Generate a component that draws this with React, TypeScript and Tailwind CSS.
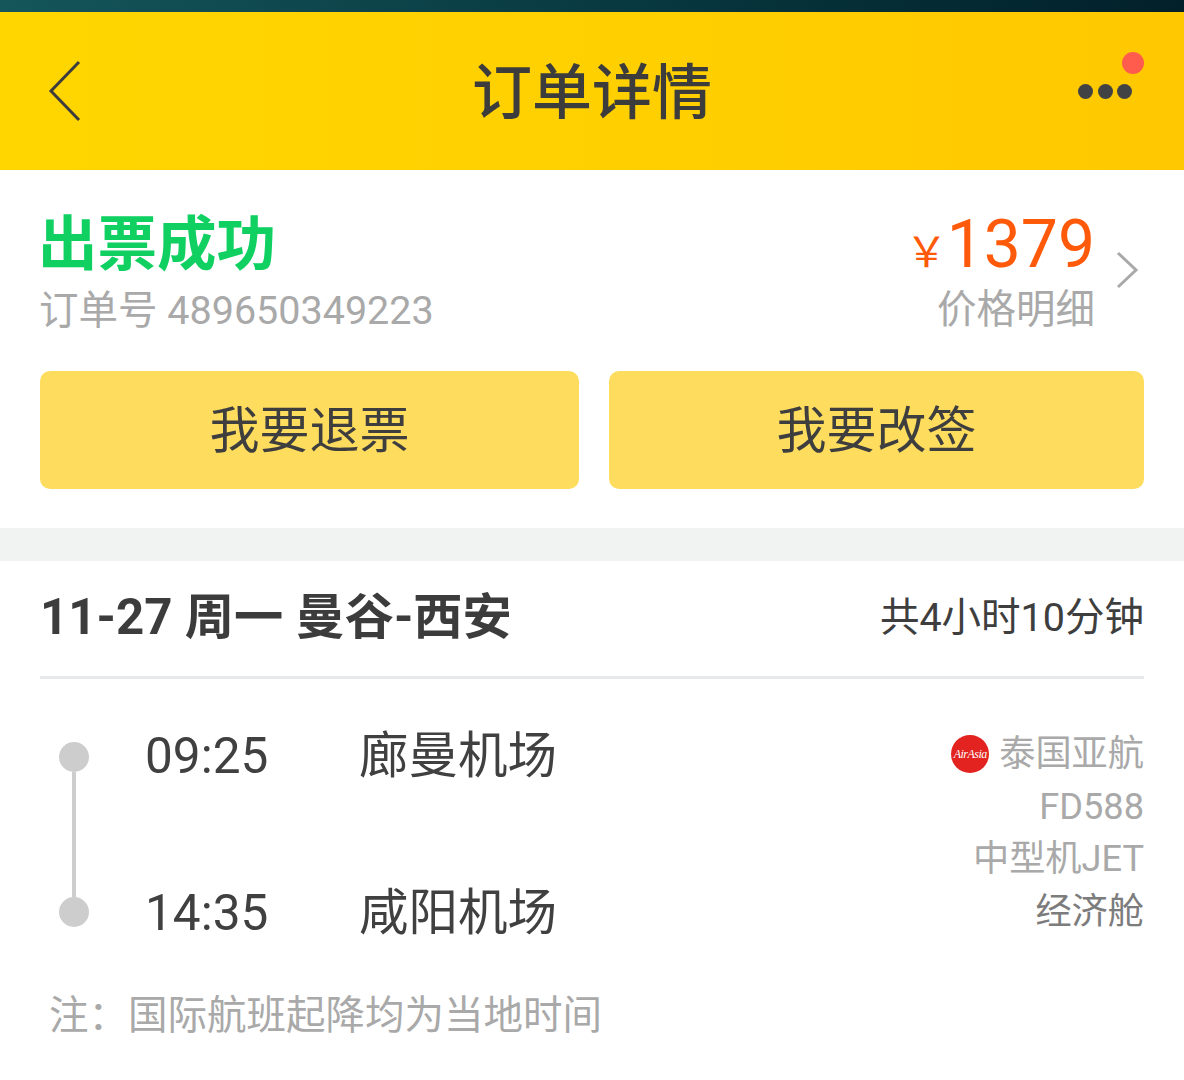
import React from "react";

const font = "font-['Roboto','Noto_Sans_CJK_SC',sans-serif]";

const Header: React.FC = () => (
    <header className="flex h-[158px] items-center bg-gradient-to-r from-[#ffd600] via-[#ffd000] to-[#ffc800] pl-[48px] pr-[52px]">
        <div className="flex-1">
            <svg width="34" height="62" viewBox="0 0 34 62" fill="none" className="mt-[-1px]">
                <path d="M31 2 L3 31 L31 60" stroke="#3d3d3d" strokeWidth="3" />
            </svg>
        </div>
        <h1 className="mt-[5px] ml-[4px] text-[60px] font-medium leading-none text-[#3c3c3c]">订单详情</h1>
        <div className="flex flex-1 justify-end">
            <div className="relative mt-[0px] flex w-[54px] justify-between">
                <span className="h-[15px] w-[15px] rounded-full bg-[#404244]" />
                <span className="h-[15px] w-[15px] rounded-full bg-[#404244]" />
                <span className="h-[15px] w-[15px] rounded-full bg-[#404244]" />
                <span className="absolute right-[-12px] top-[-32px] h-[22px] w-[22px] rounded-full bg-[#ff5c4d]" />
            </div>
        </div>
    </header>
);

const OrderCard: React.FC = () => (
    <section className="h-[358px] px-[40px] pt-[41px]">
        <div className="flex items-start justify-between">
            <div className="ml-[-2px]">
                <div className="mt-[2px] text-[59.5px] font-bold leading-[64px] text-[#10d062]">出票成功</div>
                <div className="mt-[11px] ml-[1px] text-[39.5px] leading-[46px] text-[#a9a9a9]">订单号 489650349223</div>
            </div>
            <div className="flex items-center">
                <div className="pt-[2px] text-right">
                    <div className="flex items-baseline justify-end leading-[64px] text-[#ff5a0a]">
                        <span className="mr-[-1px] text-[42px]">￥</span>
                        <span className="text-[66px]">1379</span>
                    </div>
                    <div className="mt-[2px] text-[39.5px] leading-[46px] text-[#a9a9a9]">价格明细</div>
                </div>
                <svg width="24" height="38" viewBox="0 0 24 38" fill="none" className="ml-[20px] mr-[5px] mt-[-4px]">
                    <path d="M3 2 L21 19 L3 36" stroke="#a9a9a9" strokeWidth="3" />
                </svg>
            </div>
        </div>
        <div className="mt-[37px] flex gap-[30px]">
            <button className="h-[118px] w-[539px] rounded-[10px] bg-[#fddc5e] pt-[2px] text-[50px] text-[#3e3e3e]">我要退票</button>
            <button className="h-[118px] flex-1 rounded-[10px] bg-[#fddc5e] pt-[2px] text-[50px] text-[#3e3e3e]">我要改签</button>
        </div>
    </section>
);

const Timeline: React.FC = () => (
    <div className="ml-[19px] mr-[56px] flex w-[30px] flex-col items-center pt-[22px]">
        <span className="h-[30px] w-[30px] shrink-0 rounded-full bg-[#cdcdcd]" />
        <span className="h-[125px] w-[4px] bg-[#cdcdcd]" />
        <span className="h-[30px] w-[30px] shrink-0 rounded-full bg-[#cdcdcd]" />
    </div>
);

const FlightCard: React.FC = () => (
    <section className="px-[40px]">
        <div className="flex h-[118px] items-center justify-between border-b-[3px] border-[#e6e8e9] pb-[1px]">
            <div className="text-[49.25px] font-bold text-[#3c3c3c]">11-27 周一 曼谷-西安</div>
            <div className="text-[39.5px] text-[#3e3e3e]">共4小时10分钟</div>
        </div>
        <div className="flex items-start pt-[41px]">
            <Timeline />
            <div className="mt-[7px] flex flex-col gap-[99px] text-[49.5px] leading-[58px] text-[#404040]">
                <div className="flex">
                    <span className="w-[214px]">09:25</span>
                    <span>廊曼机场</span>
                </div>
                <div className="flex">
                    <span className="w-[214px]">14:35</span>
                    <span>咸阳机场</span>
                </div>
            </div>
            <div className="ml-auto mt-[8px] flex flex-col items-end text-[36.2px] leading-[52.7px] text-[#a9a9a9]">
                <div className="flex items-center">
                    <span className="mr-[10px] flex h-[38px] w-[38px] items-center justify-center rounded-full bg-[#e2231f] font-['Liberation_Serif',serif] text-[12px] italic tracking-[-0.5px] text-white">
                        AirAsia
                    </span>
                    泰国亚航
                </div>
                <div>FD588</div>
                <div>中型机JET</div>
                <div className="text-[#7c7c7c]">经济舱</div>
            </div>
        </div>
        <div className="mt-[51px] pl-[9px] text-[39.5px] leading-[46px] text-[#a9a9a9]">注：国际航班起降均为当地时间</div>
    </section>
);

export default function App() {
    return (
        <div className={`h-[1080px] w-[1184px] overflow-hidden bg-white ${font}`}>
            <div className="h-[12px] bg-gradient-to-r from-[#14565a] to-[#02202a]" />
            <Header />
            <OrderCard />
            <div className="h-[33px] bg-[#f1f3f3]" />
            <FlightCard />
        </div>
    );
}
